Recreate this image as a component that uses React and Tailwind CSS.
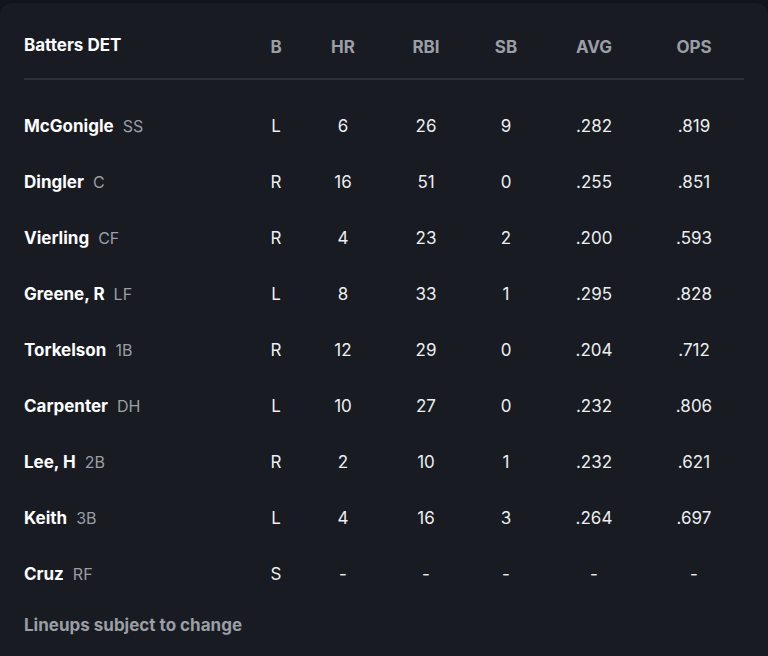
const columns = [
  { key: "b", label: "B", width: "w-[52px]" },
  { key: "hr", label: "HR", width: "w-[82px]" },
  { key: "rbi", label: "RBI", width: "w-[84px]" },
  { key: "sb", label: "SB", width: "w-[76px]" },
  { key: "avg", label: "AVG", width: "w-[100px]" },
  { key: "ops", label: "OPS", width: "w-[100px]" },
];

const batters = [
  { name: "McGonigle", pos: "SS", b: "L", hr: "6", rbi: "26", sb: "9", avg: ".282", ops: ".819" },
  { name: "Dingler", pos: "C", b: "R", hr: "16", rbi: "51", sb: "0", avg: ".255", ops: ".851" },
  { name: "Vierling", pos: "CF", b: "R", hr: "4", rbi: "23", sb: "2", avg: ".200", ops: ".593" },
  { name: "Greene, R", pos: "LF", b: "L", hr: "8", rbi: "33", sb: "1", avg: ".295", ops: ".828" },
  { name: "Torkelson", pos: "1B", b: "R", hr: "12", rbi: "29", sb: "0", avg: ".204", ops: ".712" },
  { name: "Carpenter", pos: "DH", b: "L", hr: "10", rbi: "27", sb: "0", avg: ".232", ops: ".806" },
  { name: "Lee, H", pos: "2B", b: "R", hr: "2", rbi: "10", sb: "1", avg: ".232", ops: ".621" },
  { name: "Keith", pos: "3B", b: "L", hr: "4", rbi: "16", sb: "3", avg: ".264", ops: ".697" },
  { name: "Cruz", pos: "RF", b: "S", hr: "-", rbi: "-", sb: "-", avg: "-", ops: "-" },
];

function App() {
  return (
    <div className="min-h-[656px] bg-[#111419] pt-[3px] font-['Inter',sans-serif]">
      <div className="rounded-t-xl bg-[#181b21] px-6 pt-[23px] pb-6">
        <div className="flex h-10 items-center">
          <div className="flex-1 text-[17px] font-bold text-white">Batters DET</div>
          {columns.map((c) => (
            <div
              key={c.key}
              className={`${c.width} pt-[3px] text-center text-[17px] font-bold text-[#9a9ea5]`}
            >
              {c.label}
            </div>
          ))}
        </div>
        <div className="mt-[12px] h-[2px] bg-[#2c3138]" />
        <div className="mt-[19px]">
          {batters.map((p) => (
            <div key={p.name} className="flex h-14 items-center">
              <div className="flex flex-1 items-baseline gap-[9px]">
                <span className="text-[17px] font-bold text-white">{p.name}</span>
                <span className="text-[16px] text-[#9a9ea5]">{p.pos}</span>
              </div>
              {columns.map((c) => (
                <div
                  key={c.key}
                  className={`${c.width} text-center text-[17px] text-[#eceef0]`}
                >
                  {p[c.key]}
                </div>
              ))}
            </div>
          ))}
        </div>
        <div className="mt-[10px] text-[17px] font-bold text-[#9a9ea5]">
          Lineups subject to change
        </div>
      </div>
    </div>
  );
}

export default App;
